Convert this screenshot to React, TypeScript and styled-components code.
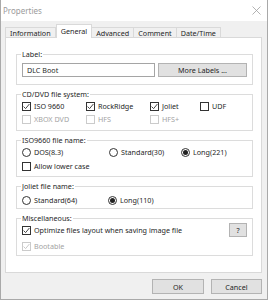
import React from "react";
import styled, { createGlobalStyle } from "styled-components";

const Global = createGlobalStyle`
  html, body { margin: 0; padding: 0; background: #ffffff; }
  body { font-family: "Noto Sans", "Open Sans", sans-serif; font-size: 7.2px; color: #1f1f1f; }
  * { box-sizing: border-box; }
`;

const Window = styled.div`
  width: 268px;
  height: 300px;
  background: #f0f0f0;
  border: 1px solid #a9a9a9;
  border-top: none;
  display: flex;
  flex-direction: column;
`;

const TitleBar = styled.div`
  height: 21px;
  background: #ffffff;
  display: flex;
  align-items: center;
  justify-content: space-between;
  padding: 0 6px 0 2px;
`;

const Title = styled.span`
  font-size: 8px;
  color: #9b9b9b;
`;

const Body = styled.div`
  flex: 1;
  display: flex;
  flex-direction: column;
  padding: 3px 5px 0 4px;
`;

const TabStrip = styled.div`
  display: flex;
  align-items: flex-end;
  height: 13px;
`;

const Tab = styled.div<{ $active?: boolean }>`
  height: ${(p) => (p.$active ? "14px" : "10px")};
  padding: ${(p) => (p.$active ? "1px 4px 0" : "0 4px")};
  margin-bottom: ${(p) => (p.$active ? "-1px" : "0")};
  background: ${(p) => (p.$active ? "#ffffff" : "#f0f0f0")};
  border: 1px solid #d9d9d9;
  border-bottom: none;
  border-left-width: ${(p) => (p.$active ? "1px" : "0")};
  display: flex;
  align-items: ${(p) => (p.$active ? "flex-start" : "center")};
  line-height: 10px;
  position: relative;
  z-index: ${(p) => (p.$active ? 1 : 0)};
  &:first-child { border-left-width: 1px; }
`;

const Panel = styled.div`
  height: 236px;
  background: #ffffff;
  border: 1px solid #d9d9d9;
  padding: 11px 8px 0 10px;
  display: flex;
  flex-direction: column;
  gap: 4px;
`;

const Group = styled.fieldset<{ $pt?: number; $pb?: number; $gap?: number }>`
  margin: 0;
  min-width: 0;
  border: 1px solid #dcdcdc;
  padding: ${(p) => p.$pt ?? 3}px 5px ${(p) => p.$pb ?? 5}px 5px;
  display: flex;
  flex-direction: column;
  gap: ${(p) => p.$gap ?? 3}px;
`;

const Legend = styled.legend`
  padding: 0 1px;
  margin-left: -1px;
  line-height: 10px;
`;

const Row = styled.div<{ $cols?: string }>`
  display: grid;
  grid-template-columns: ${(p) => p.$cols ?? "1fr"};
  align-items: center;
`;

const InputRow = styled.div`
  display: flex;
  gap: 3px;
`;

const TextBox = styled.div`
  width: 133px;
  height: 14px;
  border: 1px solid #a5a5a5;
  background: #ffffff;
  padding-left: 4px;
  display: flex;
  align-items: center;
`;

const Button = styled.div<{ $w?: number }>`
  ${(p) => (p.$w ? `width: ${p.$w}px;` : "flex: 1;")}
  height: 14px;
  border: 1px solid #b3b3b3;
  background: #e1e1e1;
  display: flex;
  align-items: center;
  justify-content: center;
`;

const OptRow = styled.label<{ $disabled?: boolean }>`
  display: flex;
  align-items: center;
  height: 10px;
  gap: 3px;
  color: ${(p) => (p.$disabled ? "#a3a3a3" : "#1f1f1f")};
  white-space: nowrap;
`;

const Box = styled.span<{ $disabled?: boolean }>`
  width: 9px;
  height: 9px;
  border: 1px solid ${(p) => (p.$disabled ? "#cbcbcb" : "#333333")};
  background: #ffffff;
  display: flex;
  align-items: center;
  justify-content: center;
  flex: none;
`;

const Circle = styled.span`
  width: 9px;
  height: 9px;
  border: 1px solid #333333;
  border-radius: 50%;
  background: #ffffff;
  display: flex;
  align-items: center;
  justify-content: center;
  flex: none;
`;

const Dot = styled.span`
  width: 5px;
  height: 5px;
  border-radius: 50%;
  background: #222222;
`;

const MiscRow = styled.div`
  display: flex;
  align-items: center;
  justify-content: space-between;
  height: 14px;
`;

const Footer = styled.div`
  display: flex;
  justify-content: flex-end;
  gap: 7px;
  padding-top: 6px;
`;

const FooterButton = styled(Button)`
  height: 15px;
`;

function Check({ label, checked, disabled }: { label: string; checked?: boolean; disabled?: boolean }) {
  const c = disabled ? "#c4c4c4" : "#333333";
  return (
    <OptRow $disabled={disabled}>
      <Box $disabled={disabled}>
        {checked && (
          <svg width="7" height="7" viewBox="0 0 7 7">
            <path d="M0.6 3.6 L2.6 5.6 L6.4 1" fill="none" stroke={c} strokeWidth="0.9" />
          </svg>
        )}
      </Box>
      {label}
    </OptRow>
  );
}

function Radio({ label, checked }: { label: string; checked?: boolean }) {
  return (
    <OptRow>
      <Circle>{checked && <Dot />}</Circle>
      {label}
    </OptRow>
  );
}

export default function App() {
  return (
    <>
      <Global />
      <Window>
        <TitleBar>
          <Title>Properties</Title>
          <svg width="9" height="9" viewBox="0 0 9 9">
            <path d="M0.5 0.5 L8.5 8.5 M8.5 0.5 L0.5 8.5" stroke="#a0a0a0" strokeWidth="0.8" />
          </svg>
        </TitleBar>
        <Body>
          <TabStrip>
            <Tab>Information</Tab>
            <Tab $active>General</Tab>
            <Tab>Advanced</Tab>
            <Tab>Comment</Tab>
            <Tab>Date/Time</Tab>
          </TabStrip>
          <Panel>
            <Group $pt={4} $pb={7}>
              <Legend>Label:</Legend>
              <InputRow>
                <TextBox>DLC Boot</TextBox>
                <Button>More Labels ...</Button>
              </InputRow>
            </Group>
            <Group $pt={2} $pb={6}>
              <Legend>CD/DVD file system:</Legend>
              <Row $cols="64px 64px 50px 1fr">
                <Check label="ISO 9660" checked />
                <Check label="RockRidge" checked />
                <Check label="Joliet" checked />
                <Check label="UDF" />
              </Row>
              <Row $cols="64px 64px 50px 1fr">
                <Check label="XBOX DVD" disabled />
                <Check label="HFS" disabled />
                <Check label="HFS+" disabled />
              </Row>
            </Group>
            <Group $pt={2} $pb={5} $gap={4}>
              <Legend>ISO9660 file name:</Legend>
              <Row $cols="87px 72px 1fr">
                <Radio label="DOS(8.3)" />
                <Radio label="Standard(30)" />
                <Radio label="Long(221)" checked />
              </Row>
              <Row>
                <Check label="Allow lower case" />
              </Row>
            </Group>
            <Group $pt={4} $pb={3}>
              <Legend>Joliet file name:</Legend>
              <Row $cols="86px 1fr">
                <Radio label="Standard(64)" />
                <Radio label="Long(110)" checked />
              </Row>
            </Group>
            <Group $pt={0} $pb={4} $gap={4}>
              <Legend>Miscellaneous:</Legend>
              <MiscRow>
                <Check label="Optimize files layout when saving image file" checked />
                <Button $w={18}>?</Button>
              </MiscRow>
              <Row>
                <Check label="Bootable" checked disabled />
              </Row>
            </Group>
          </Panel>
          <Footer>
            <FooterButton $w={52}>OK</FooterButton>
            <FooterButton $w={51}>Cancel</FooterButton>
          </Footer>
        </Body>
      </Window>
    </>
  );
}
